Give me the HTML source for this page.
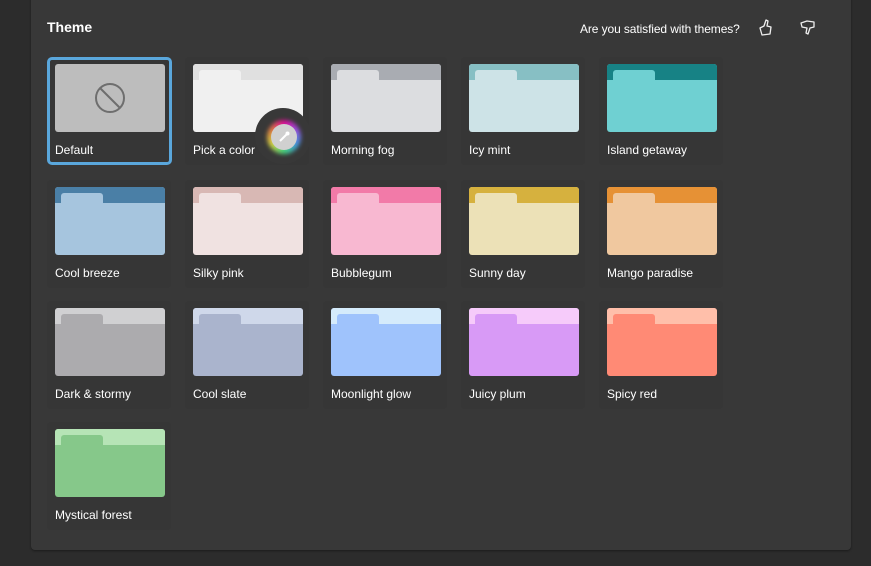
<!DOCTYPE html>
<html><head><meta charset="utf-8"><style>
*{margin:0;padding:0;box-sizing:border-box}
body{width:871px;height:566px;background:#2c2c2c;font-family:"Segoe UI","Liberation Sans",sans-serif;overflow:hidden;position:relative;color:#fff}
.panel{position:absolute;left:31px;top:-4px;width:820px;height:554px;background:#383838;border-radius:4px;box-shadow:0 1px 2px rgba(0,0,0,.4)}
.title{position:absolute;left:47px;top:19px;font-size:14px;font-weight:bold}
.q{position:absolute;left:580px;top:22px;font-size:12px;letter-spacing:-0.1px}
.card{position:absolute;width:124px;height:108px;background:#363636;border-radius:4px}
.tile{position:absolute;width:110px;height:68px;border-radius:3px;overflow:hidden}
.bar{position:absolute;left:0;top:0;width:110px;height:16px}
.tab{position:absolute;left:6px;top:6px;width:42px;height:14px;border-radius:3px 3px 0 0}
.lbl{position:absolute;font-size:12px;color:#fff}
.sel{position:absolute;left:47px;top:57px;width:125px;height:108px;border:3px solid #5aa7dc;border-radius:5px}
</style></head><body>
<div class="panel"></div>
<div class="title">Theme</div>
<div class="q">Are you satisfied with themes?</div>
<svg style="position:absolute;left:757px;top:18px" width="18" height="20" viewBox="0 0 18 20"><path d="M3 10 L7 8 L9 2 L11 3 L10 8 L14 9 L13 16 L5 17 Z" fill="none" stroke="#eee" stroke-width="1.3" stroke-linejoin="round"/></svg>
<svg style="position:absolute;left:799px;top:18px" width="18" height="20" viewBox="0 0 18 20"><path d="M2 5 L8 3 L15 4 L15 9 L11 10 L9 16 L7 15 L8 10 L3 9 Z" fill="none" stroke="#eee" stroke-width="1.3" stroke-linejoin="round"/></svg>
<div id="g"></div>
<script>
const T=[["Default","#bdbdbd","#bdbdbd"],["Pick a color","#e0e0e0","#f0f0f0"],["Morning fog","#a9acb2","#dcdde0"],["Icy mint","#87bfc4","#cde3e7"],["Island getaway","#178285","#6fd0d2"],
["Cool breeze","#4a7fa6","#a6c5de"],["Silky pink","#d8b8b4","#f0e2e1"],["Bubblegum","#f27aa8","#f8b8d1"],["Sunny day","#d6b13e","#ece1b7"],["Mango paradise","#e69135","#f0c89f"],
["Dark &amp; stormy","#d0d0d2","#acabae"],["Cool slate","#cfd8ea","#aab4cd"],["Moonlight glow","#d5ebfb","#9fc3fc"],["Juicy plum","#f6cbfa","#d89af6"],["Spicy red","#ffbfaa","#ff8a75"],
["Mystical forest","#b6e4b6","#86c88a"]];
const tops=[64,187,308,429];let h="";
T.forEach((t,i)=>{const c=i%5,r=Math.floor(i/5);const x=55+c*138,y=tops[r];
h+=`<div class="card" style="left:${x-8}px;top:${y-7}px"></div>`;
if(i==0){h+=`<div class="tile" style="left:${x}px;top:${y}px;background:#bdbdbd"><svg width="110" height="68"><circle cx="55" cy="34" r="14" fill="none" stroke="#6e6e6e" stroke-width="2"/><line x1="45" y1="24" x2="65" y2="44" stroke="#6e6e6e" stroke-width="2"/></svg></div>`;}
else h+=`<div class="tile" style="left:${x}px;top:${y}px;background:${t[2]}"><div class="bar" style="background:${t[1]}"></div><div class="tab" style="background:${t[2]}"></div></div>`;
h+=`<div class="lbl" style="left:${x}px;top:${y+79}px">${t[0]}</div>`;});
h+=`<div class="sel"></div>`;
h+=`<div style="position:absolute;left:255px;top:108px;width:56px;height:56px;border-radius:50%;background:#383838"></div>`;
h+=`<div style="position:absolute;left:267px;top:120px;width:34px;height:34px;border-radius:50%;background:conic-gradient(#f0a,#a5f,#4af,#4e8,#ee4,#f84,#f0a);filter:blur(2px);opacity:.85"></div>`;
h+=`<div style="position:absolute;left:271px;top:124px;width:26px;height:26px;border-radius:50%;background:#d0d0d0"></div>`;
h+=`<svg style="position:absolute;left:276px;top:129px" width="16" height="16"><line x1="4" y1="12" x2="11" y2="5" stroke="#fff" stroke-width="2"/><circle cx="11.5" cy="4.5" r="2" fill="#fff"/></svg>`;
document.getElementById("g").innerHTML=h;
</script>
</body></html>
